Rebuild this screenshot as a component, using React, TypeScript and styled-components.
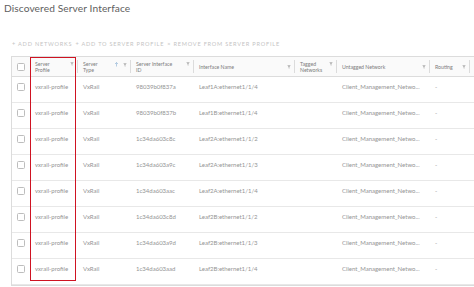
import React from 'react'
import styled, { createGlobalStyle } from 'styled-components'

const GlobalStyle = createGlobalStyle`
  html, body {
    margin: 0;
    padding: 0;
    background: #ffffff;
  }
  body {
    font-family: Lato, 'Open Sans', 'Liberation Sans', sans-serif;
    overflow: hidden;
  }
`

const COLS = '18px 48px 53px 63px 101px 42px 93px 40px 1fr'

const Page = styled.div`
  width: 474px;
  height: 287px;
  overflow: hidden;
  padding: 1px 0 0 4px;
  box-sizing: border-box;
`

const Title = styled.h2`
  margin: 0;
  font-size: 10.2px;
  line-height: 14px;
  font-weight: 400;
  color: #5e5e5e;
  letter-spacing: 0.1px;
`

const Toolbar = styled.div`
  display: flex;
  gap: 3px;
  margin: 23px 0 0 8px;
  height: 10px;
  align-items: center;
`

const Action = styled.span`
  font-size: 5.6px;
  letter-spacing: 0.78px;
  text-transform: uppercase;
  color: #c4c4c4;
  white-space: nowrap;
`

const TableWrap = styled.div`
  position: relative;
  margin: 8px 0 0 7px;
  border: 1px solid #dcdcdc;
  border-right: none;
  width: 490px;
`

const Row = styled.div<{ $head?: boolean }>`
  display: grid;
  grid-template-columns: ${COLS};
  height: ${p => (p.$head ? '20px' : '26px')};
  background: ${p => (p.$head ? '#fafafa' : '#ffffff')};
  border-bottom: 1px solid ${p => (p.$head ? '#dcdcdc' : '#e8e8e8')};
  box-sizing: border-box;
`

const HeadCell = styled.div<{ $middle?: boolean }>`
  position: relative;
  display: flex;
  align-items: ${p => (p.$middle ? 'center' : 'flex-start')};
  padding: ${p => (p.$middle ? '0 4px 0 5px' : '4px 4px 0 5px')};
  font-size: 5.2px;
  line-height: 6px;
  color: #7c7c7c;
  &::after {
    content: '';
    position: absolute;
    right: 0;
    top: 3px;
    bottom: 3px;
    width: 1px;
    background: #dcdcdc;
  }
`

const HeadLabel = styled.span`
  flex: 1;
`

const IconBox = styled.span`
  display: flex;
  gap: 4px;
  align-items: center;
  margin-top: 1px;
`

const Cell = styled.div`
  padding: 6px 4px 0 5px;
  font-size: 6px;
  line-height: 7px;
  color: #949494;
  white-space: nowrap;
  overflow: hidden;
`

const CheckCell = styled.div`
  display: flex;
  justify-content: center;
  padding-top: 6px;
`

const Check = styled.span`
  width: 6px;
  height: 6px;
  border: 1px solid #bdbdbd;
  border-radius: 1.5px;
  background: #fff;
`

const Highlight = styled.div`
  position: absolute;
  left: 18px;
  top: 0px;
  width: 46px;
  height: 224px;
  border: 1.5px solid #cf1322;
  box-sizing: border-box;
  pointer-events: none;
`

const Filter = () => (
  <svg width="4" height="4" viewBox="0 0 8 8">
    <path d="M0.5 0.5h7L4.8 3.8v3.7L3.2 6.6V3.8z" fill="#b0b0b0" />
  </svg>
)

const Sort = () => (
  <svg width="5" height="5" viewBox="0 0 10 10">
    <path d="M5 1v8M2 4l3-3 3 3" stroke="#8fb3d6" strokeWidth="1.3" fill="none" />
  </svg>
)

type Col = { label: React.ReactNode; sort?: boolean; middle?: boolean }

const columns: Col[] = [
  { label: <>Server<br />Profile</> },
  { label: <>Server<br />Type</>, sort: true },
  { label: <>Server Interface<br />ID</> },
  { label: 'Interface Name', middle: true },
  { label: <>Tagged<br />Networks</> },
  { label: 'Untagged Network', middle: true },
  { label: 'Routing', middle: true },
]

const rows = [
  ['98039b0f837a', 'Leaf1A:ethernet1/1/4'],
  ['98039b0f837b', 'Leaf1B:ethernet1/1/4'],
  ['1c34da603c8c', 'Leaf2A:ethernet1/1/2'],
  ['1c34da603a9c', 'Leaf2A:ethernet1/1/3'],
  ['1c34da603aac', 'Leaf2A:ethernet1/1/4'],
  ['1c34da603c8d', 'Leaf2B:ethernet1/1/2'],
  ['1c34da603a9d', 'Leaf2B:ethernet1/1/3'],
  ['1c34da603aad', 'Leaf2B:ethernet1/1/4'],
]

export default function App() {
  return (
    <Page>
      <GlobalStyle />
      <Title>Discovered Server Interface</Title>
      <Toolbar>
        <Action>+ Add Networks</Action>
        <Action>+ Add to Server Profile</Action>
        <Action>× Remove from Server Profile</Action>
      </Toolbar>
      <TableWrap>
        <Row $head>
          <CheckCell>
            <Check />
          </CheckCell>
          {columns.map((c, i) => (
            <HeadCell key={i} $middle={c.middle}>
              <HeadLabel>{c.label}</HeadLabel>
              <IconBox>
                {c.sort && <Sort />}
                <Filter />
              </IconBox>
            </HeadCell>
          ))}
          <div />
        </Row>
        {rows.map(([id, name]) => (
          <Row key={id}>
            <CheckCell>
              <Check />
            </CheckCell>
            <Cell>vxrail-profile</Cell>
            <Cell>VxRail</Cell>
            <Cell>{id}</Cell>
            <Cell>{name}</Cell>
            <Cell />
            <Cell>Client_Management_Netwo...</Cell>
            <Cell>-</Cell>
            <Cell />
          </Row>
        ))}
        <Highlight />
      </TableWrap>
    </Page>
  )
}
